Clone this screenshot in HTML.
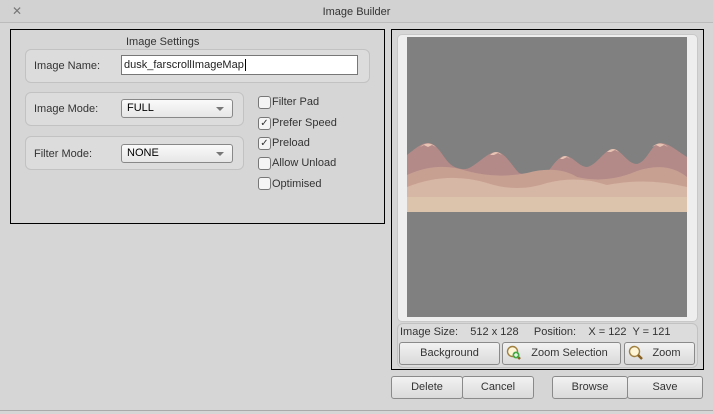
<!DOCTYPE html>
<html><head><style>
body{margin:0;width:713px;height:413px;background:#d6d6d6;font-family:"Liberation Sans",sans-serif;font-size:11px;color:#333;position:relative;overflow:hidden}
.a{position:absolute}
.grp{position:absolute;border:1px solid #c2c2c2;border-radius:6px;background:#dcdcdc}
.btn{position:absolute;border:1px solid #8a8a8a;border-radius:3px;background:linear-gradient(#f2f2f2,#dadada);text-align:center;line-height:21px;color:#333;box-sizing:border-box;height:23px}
.cb{position:absolute;width:11px;height:11px;border:1px solid #777;border-radius:3px;background:#f4f4f4}
.sel{position:absolute;border:1px solid #888;border-radius:3px;background:linear-gradient(#fafafa,#e6e6e6);color:#000;box-sizing:border-box;height:19px;line-height:17px;padding-left:5px}
.sel:after{content:"";position:absolute;right:8px;top:7px;border:4px solid transparent;border-top:4px solid #777}
</style></head><body>
<div class="a" style="left:0;top:0;width:713px;height:22px;background:#d2d2d2;border-bottom:1px solid #bbb"></div>
<div class="a" style="left:12px;top:4px;color:#777;font-size:12px">✕</div>
<div class="a" style="left:0;width:713px;top:6px;text-align:center;color:#333">Image Builder</div>

<div class="a" style="left:10px;top:29px;width:373px;height:193px;border:1px solid #000"></div>
<div class="a" style="left:126px;top:36px">Image Settings</div>
<div class="grp" style="left:25px;top:49px;width:343px;height:32px"></div>
<div class="a" style="left:34px;top:60px">Image Name:</div>
<div class="a" style="left:121px;top:55px;width:237px;height:20px;border:1px solid #777;background:#fff;box-sizing:border-box;padding-left:2px;line-height:18px;color:#222">dusk_farscrollImageMap<span style="border-left:1px solid #000;margin-left:1px"></span></div>

<div class="grp" style="left:25px;top:92px;width:217px;height:32px"></div>
<div class="a" style="left:34px;top:103px">Image Mode:</div>
<div class="sel" style="left:121px;top:99px;width:112px">FULL</div>
<div class="grp" style="left:25px;top:136px;width:217px;height:32px"></div>
<div class="a" style="left:34px;top:148px">Filter Mode:</div>
<div class="sel" style="left:121px;top:144px;width:112px">NONE</div>

<div class="cb" style="left:258px;top:96px"></div><div class="a" style="left:272px;top:96px">Filter Pad</div>
<div class="cb" style="left:258px;top:117px;font-size:10px;line-height:11px;text-align:center">✓</div><div class="a" style="left:272px;top:117px">Prefer Speed</div>
<div class="cb" style="left:258px;top:137px;font-size:10px;line-height:11px;text-align:center">✓</div><div class="a" style="left:272px;top:137px">Preload</div>
<div class="cb" style="left:258px;top:157px"></div><div class="a" style="left:272px;top:157px">Allow Unload</div>
<div class="cb" style="left:258px;top:177px"></div><div class="a" style="left:272px;top:178px">Optimised</div>

<div class="a" style="left:391px;top:29px;width:311px;height:339px;border:1px solid #000"></div>
<div class="a" style="left:397px;top:34px;width:299px;height:286px;background:#eeeeee;border:1px solid #c8c8c8;border-radius:5px"></div>
<svg class="a" style="left:407px;top:37px" width="280" height="280" viewBox="0 0 280 280">
<rect width="280" height="280" fill="#808080"/>
<path d="M0 118 C8 112 14 106 21 106 C30 106 36 120 42 126 C48 132 58 134 64 130 C74 124 82 115 89 115 C98 115 104 128 112 136 C120 139 132 139 140 136 C146 128 152 119 158 119 C166 119 172 130 180 130 C190 128 198 112 206 112 C214 112 220 127 230 127 C240 125 245 106 253 106 C262 106 270 114 280 120 L280 175 L0 175Z" fill="#b48a88"/>
<path d="M13 110 Q21 103 29 110 L25 108 L21 110 L17 108Z M83 118 Q89 112 95 118 L91 116 L87 118Z M153 122 Q158 116 163 122 L160 120 L156 122Z M200 115 Q206 109 212 115 L208 113 L204 115Z M245 110 Q253 103 261 110 L257 108 L253 110 L249 108Z" fill="#e8c4b4"/>
<path d="M0 138 Q30 124 60 134 Q90 142 120 136 Q150 128 170 140 Q200 147 230 134 Q260 124 280 140 L280 175 L0 175Z" fill="#c8a092"/>
<path d="M0 150 Q40 134 80 146 Q110 156 140 146 Q170 138 200 148 Q240 140 280 150 L280 175 L0 175Z" fill="#d6b6a4"/>
<rect y="160" width="280" height="15" fill="#dcc4ac"/>
</svg>

<div class="grp" style="left:397px;top:323px;width:299px;height:43px"></div>
<div class="a" style="left:400px;top:326px">Image Size:&nbsp;&nbsp;&nbsp; 512 x 128&nbsp;&nbsp;&nbsp;&nbsp; Position:&nbsp;&nbsp;&nbsp; X = 122&nbsp; Y = 121</div>
<div class="btn" style="left:399px;top:342px;width:101px">Background</div>
<div class="btn" style="left:502px;top:342px;width:119px;padding-left:16px">Zoom Selection</div>
<div class="btn" style="left:624px;top:342px;width:71px;padding-left:14px">Zoom</div>
<svg class="a" style="left:506px;top:345px" width="16" height="16"><circle cx="6.5" cy="6.5" r="5" fill="#fff6d8" stroke="#a08040" stroke-width="1.4"/><path d="M10 10 L14 14" stroke="#8a6020" stroke-width="2.5"/><circle cx="10" cy="10" r="3.5" fill="#4a4"/><path d="M10 8 V12 M8 10 H12" stroke="#fff" stroke-width="1.2"/></svg>
<svg class="a" style="left:628px;top:345px" width="16" height="16"><circle cx="6.5" cy="6.5" r="5" fill="#fff6d8" stroke="#a08040" stroke-width="1.4"/><path d="M10 10 L14 14" stroke="#8a6020" stroke-width="2.5"/></svg>

<div class="btn" style="left:391px;top:376px;width:72px">Delete</div>
<div class="btn" style="left:462px;top:376px;width:72px">Cancel</div>
<div class="btn" style="left:552px;top:376px;width:76px">Browse</div>
<div class="btn" style="left:627px;top:376px;width:76px">Save</div>
<div class="a" style="left:0;top:410px;width:713px;height:3px;border-top:1px solid #aaa"></div>
</body></html>
